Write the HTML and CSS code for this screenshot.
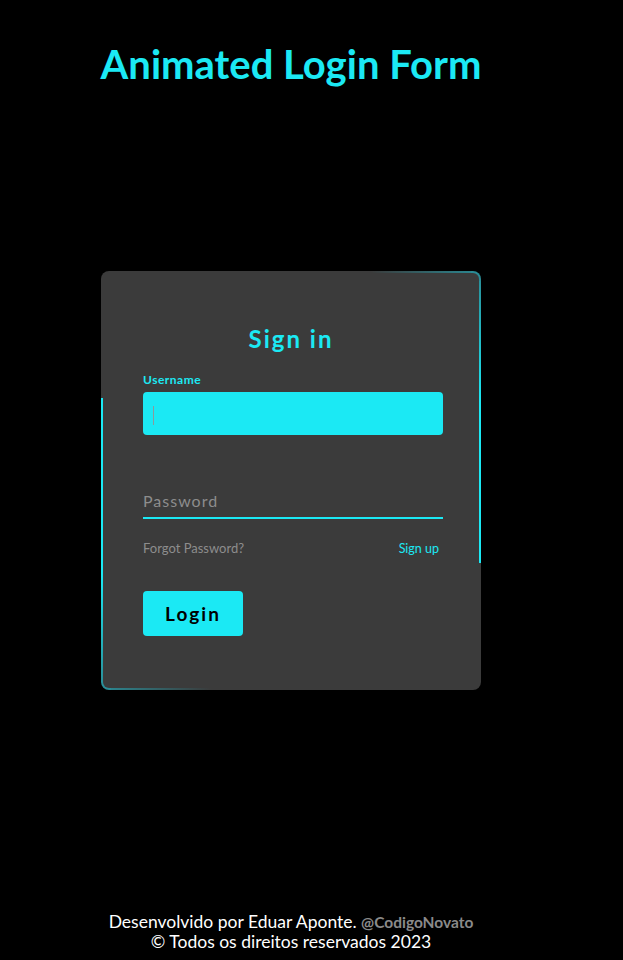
FILE: index.html
```html
<!DOCTYPE html>
<html lang="en">
<head>
    <meta charset="UTF-8">
    <meta name="viewport" content="width=device-width, initial-scale=1.0">
    <title>Animated Login Form</title>
    <link rel="stylesheet" href="styles.css">
</head>
<body>

    <div class="page">
        <h1>Animated Login Form</h1>

        <!-- Login card -->
        <div class="card">
            <form class="login-form">
                <h2>Sign in</h2>

                <label class="field-label" for="username">Username</label>
                <div class="field-wrap">
                    <input class="field field-active" id="username" type="text">
                    <span class="caret"></span>
                </div>

                <input class="field field-line" id="password" type="password" placeholder="Password">

                <div class="links">
                    <a href="#" class="forgot">Forgot Password?</a>
                    <a href="#" class="signup">Sign up</a>
                </div>

                <button type="button" class="login-button">Login</button>
            </form>
        </div>

        <footer class="footer">
            <p>Desenvolvido por Eduar Aponte. <span class="handle">@CodigoNovato</span></p>
            <p>&copy; Todos os direitos reservados 2023</p>
        </footer>
    </div>

</body>
</html>
```

FILE: styles.css
```css
body {
    font-family: "Lato", "Liberation Sans", sans-serif;
    background-color: #000;
    margin: 0;
    padding: 0;
}
.page {
    width: 582px;
    min-height: 100vh;
    display: flex;
    flex-direction: column;
    align-items: center;
}
h1 {
    color: #1be9f4;
    font-size: 40px;
    font-weight: 700;
    line-height: 48px;
    margin: 40px 0 0;
    text-align: center;
}
.card {
    width: 380px;
    box-sizing: border-box;
    margin-top: 183px;
    border: 2px solid transparent;
    border-radius: 8px;
    background:
        linear-gradient(#3b3b3b, #3b3b3b) padding-box,
        linear-gradient(to right, rgba(42, 138, 148, 0), #2a8a94) right top / 110px 10px no-repeat border-box,
        linear-gradient(to bottom, #2a8a94, #1be9f4 45%) right top / 10px 292px no-repeat border-box,
        linear-gradient(to bottom, #1be9f4 60%, #2a8a94) left bottom / 10px 292px no-repeat border-box,
        linear-gradient(to left, rgba(42, 138, 148, 0), #2a8a94) left bottom / 110px 10px no-repeat border-box,
        #3b3b3b;
}
.login-form {
    display: flex;
    flex-direction: column;
    align-items: flex-start;
    padding: 51px 0 52px 40px;
}
h2 {
    align-self: stretch;
    margin: 0;
    padding-right: 40px;
    color: #1be9f4;
    font-size: 24px;
    font-weight: 700;
    line-height: 30px;
    letter-spacing: 2px;
    text-align: center;
}
.field-label {
    margin-top: 18px;
    color: #1be9f4;
    font-size: 12px;
    font-weight: 700;
    line-height: 16px;
    letter-spacing: 0.5px;
}
.field-wrap {
    position: relative;
    margin-top: 4px;
}
.field {
    display: block;
    width: 300px;
    box-sizing: border-box;
    font-family: inherit;
    outline: none;
}
.field-active {
    height: 43px;
    border: none;
    border-radius: 4px;
    background-color: #1be9f4;
    padding: 0 10px;
}
.caret {
    position: absolute;
    left: 10px;
    top: 14px;
    width: 1px;
    height: 19px;
    background-color: #8a9a9c;
}
.field-line {
    margin-top: 49px;
    height: 35px;
    padding: 0;
    border: none;
    border-bottom: 2px solid #1be9f4;
    background: transparent;
    color: #fff;
    font-size: 16px;
    letter-spacing: 1px;
}
.field-line::placeholder {
    color: #8d8d8d;
}
.links {
    width: 296px;
    margin-top: 20px;
    display: flex;
    justify-content: space-between;
    align-items: baseline;
    font-size: 13px;
    line-height: 18px;
}
.links a {
    text-decoration: none;
}
.forgot {
    color: #8d8d8d;
}
.signup {
    color: #1be9f4;
    font-size: 12.5px;
}
.login-button {
    margin-top: 33px;
    width: 100px;
    height: 45px;
    border: none;
    border-radius: 4px;
    background-color: #1be9f4;
    color: #000;
    font-family: inherit;
    font-size: 19px;
    font-weight: 700;
    letter-spacing: 2px;
    cursor: pointer;
}
.footer {
    margin-top: auto;
    padding-bottom: 9px;
    color: #fff;
    font-size: 17.5px;
    line-height: 19px;
    text-align: center;
}
.footer p {
    margin: 0;
}
.handle {
    color: #8a8a8a;
    font-size: 15.5px;
    font-weight: 700;
}
```
